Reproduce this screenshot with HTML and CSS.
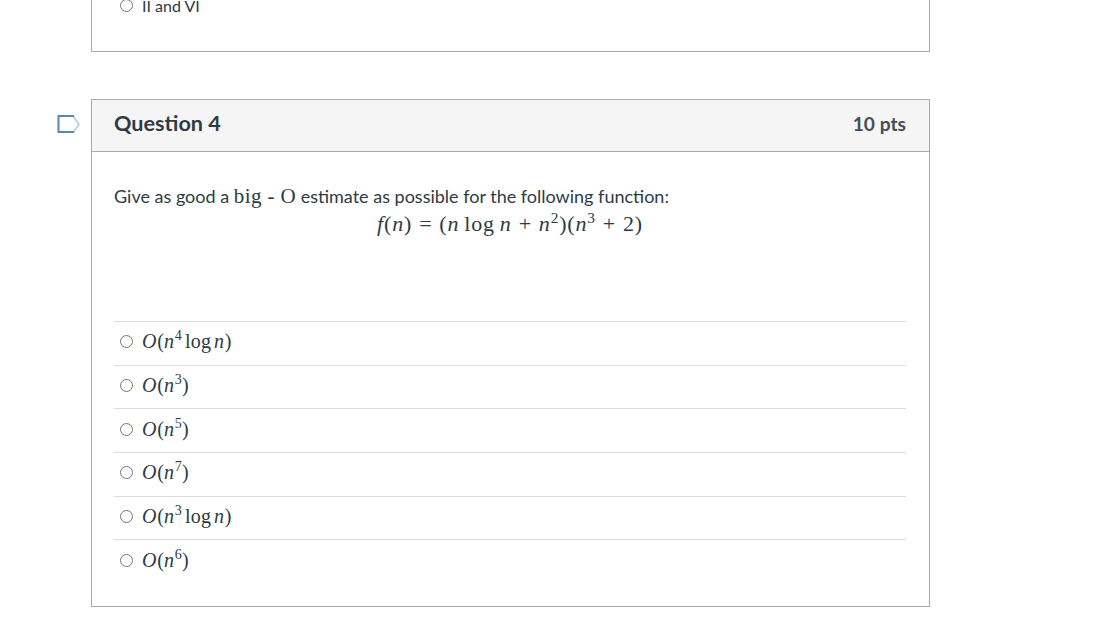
FILE: index.html
```html
<!DOCTYPE html>
<html lang="en">
<head>
  <meta charset="UTF-8">
  <title>Quiz</title>
  <link rel="stylesheet" href="styles.css">
</head>
<body>

  <div class="quiz">

    <div class="card prev-card">
      <div class="prev-option">
        <span class="radio"></span>
        <span>II and VI</span>
      </div>
    </div>

    <div class="card question">
      <svg class="flag" width="24" height="20" viewBox="0 0 24 20">
        <path d="M16.5 2.5L22 10.5L16.5 18" fill="none" stroke="#b4cadb" stroke-width="1.5"/>
        <path d="M17 2H1.5V18H17" fill="none" stroke="#5a87ab" stroke-width="2"/>
      </svg>

      <div class="card-header">
        <h3>Question 4</h3>
        <span class="pts">10 pts</span>
      </div>

      <div class="card-body">
        <p class="prompt">Give as good a <span class="serif">big - O</span> estimate as possible for the following function:</p>
        <p class="formula"><i>f</i>(<i>n</i>)<span class="op">=</span>(<i>n</i><span class="log">log</span><i>n</i><span class="op">+</span><i>n</i><sup>2</sup>)(<i>n</i><sup>3</sup><span class="op">+</span>2)</p>

        <div class="answers">
          <div class="answer"><span class="radio"></span><span class="math"><i>O</i>(<i>n</i><sup>4</sup><span class="log">log</span><i>n</i>)</span></div>
          <div class="answer"><span class="radio"></span><span class="math"><i>O</i>(<i>n</i><sup>3</sup>)</span></div>
          <div class="answer"><span class="radio"></span><span class="math"><i>O</i>(<i>n</i><sup>5</sup>)</span></div>
          <div class="answer"><span class="radio"></span><span class="math"><i>O</i>(<i>n</i><sup>7</sup>)</span></div>
          <div class="answer"><span class="radio"></span><span class="math"><i>O</i>(<i>n</i><sup>3</sup><span class="log">log</span><i>n</i>)</span></div>
          <div class="answer"><span class="radio"></span><span class="math"><i>O</i>(<i>n</i><sup>6</sup>)</span></div>
        </div>
      </div>
    </div>

  </div>

</body>
</html>
```

FILE: styles.css
```css
html, body {
  height: 100%;
}

body {
  font-family: 'Lato', 'Open Sans', sans-serif;
  background: #ffffff;
  margin: 0;
  color: #2d3b45;
  overflow: hidden;
}

.quiz {
  width: 839px;
  margin-left: 91px;
  display: flex;
  flex-direction: column;
  gap: 47px;
}

.card {
  position: relative;
  box-sizing: border-box;
  border: 1px solid #a9a9a9;
}

.prev-card {
  height: 52px;
  border-top: none;
}

.prev-option {
  display: flex;
  align-items: center;
  gap: 9px;
  height: 20px;
  margin-top: -5px;
  padding-left: 28px;
  font-size: 16px;
}

.radio {
  flex: none;
  box-sizing: border-box;
  width: 13px;
  height: 13px;
  border: 1.5px solid #767676;
  border-radius: 50%;
  background: #fff;
}

.flag {
  position: absolute;
  left: -35px;
  top: 14px;
}

.card-header {
  display: flex;
  justify-content: space-between;
  align-items: center;
  box-sizing: border-box;
  height: 52px;
  padding: 0 23px 4px 22px;
  background: #f5f5f5;
  border-bottom: 1px solid #a9a9a9;
}

.card-header h3 {
  margin: 0 0 2px;
  font-size: 21.6px;
  font-weight: 700;
}

.pts {
  font-size: 19.2px;
  font-weight: 700;
  color: #444d55;
}

.card-body {
  padding: 31px 23px 22.6px 22px;
}

.prompt {
  margin: 0;
  font-size: 18px;
  line-height: 27px;
}

.serif {
  font-family: 'Liberation Serif', serif;
  font-size: 21px;
  letter-spacing: 0.4px;
}

.formula {
  margin: 0;
  height: 97px;
  font-family: 'Liberation Serif', serif;
  font-size: 22px;
  letter-spacing: 0.8px;
  line-height: 28px;
  text-align: center;
}

.op {
  margin: 0 7px;
}

.log {
  margin: 0 5px;
}

sup {
  font-size: 70%;
  line-height: 0;
}

.answers {
  margin-top: 14px;
}

.answer {
  display: flex;
  align-items: center;
  gap: 9px;
  height: 43.7px;
  box-sizing: border-box;
  padding: 0 0 3px 6px;
  border-top: 1px solid #dddddd;
}

.math {
  font-family: 'Liberation Serif', serif;
  font-size: 20px;
  letter-spacing: 0.2px;
}

.math i {
  margin-right: 0.5px;
}

.math .log {
  margin: 0 3px;
}
```
